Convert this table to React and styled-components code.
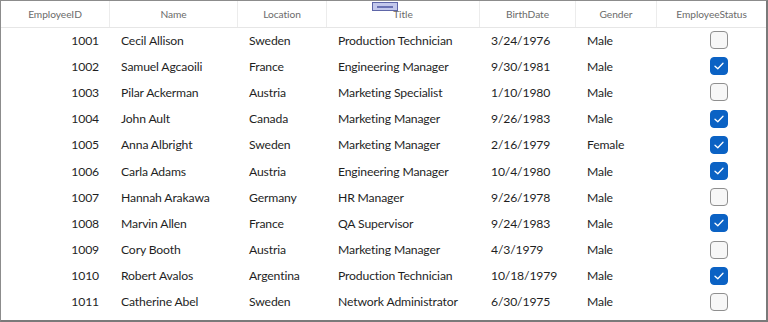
import React from "react";
import styled, { createGlobalStyle } from "styled-components";

const Global = createGlobalStyle`
  html, body { margin: 0; padding: 0; background: #fff; }
  body { font-family: Lato, "Noto Sans", sans-serif; }
`;

const COLS = "109px 128px 89px 153px 96px 81px 1fr";

const Frame = styled.div`
  position: relative;
  width: 768px;
  height: 322px;
  box-sizing: border-box;
  border: 1px solid #8c8c8c;
  border-right: 2px solid #7a7a7a;
  border-bottom: 2px solid #7a7a7a;
  background: #fff;
  overflow: hidden;
`;

const HeaderRow = styled.div`
  display: grid;
  grid-template-columns: ${COLS};
  height: 27px;
  border-bottom: 1px solid #e6e6e6;
  box-sizing: border-box;
`;

const HeaderCell = styled.div`
  display: flex;
  align-items: center;
  justify-content: center;
  font-size: 10.2px;
  letter-spacing: -0.05px;
  color: #6b6b6b;
  border-right: ${(p) => (p.$last ? "none" : "1px solid #ececec")};
  white-space: nowrap;
`;

const Row = styled.div`
  display: grid;
  grid-template-columns: ${COLS};
  height: 26.2px;
  box-sizing: border-box;
  padding-bottom: 2px;
  align-items: center;
`;

const Cell = styled.div`
  font-size: 12.2px;
  letter-spacing: -0.15px;
  color: #1f1f1f;
  white-space: nowrap;
  padding: ${(p) => (p.$right ? "0 11px 0 0" : "0 0 0 11px")};
  text-align: ${(p) => (p.$right ? "right" : "left")};
  display: ${(p) => (p.$center ? "flex" : "block")};
  justify-content: center;
`;

const Box = styled.div`
  width: 18px;
  height: 18px;
  box-sizing: border-box;
  border-radius: 4px;
  border: 1px solid ${(p) => (p.$checked ? "#0b62c4" : "#8f8f8f")};
  background: ${(p) => (p.$checked ? "#0b62c4" : "#f7f7f7")};
  display: flex;
  align-items: center;
  justify-content: center;
  margin-left: 4px;
`;

const DragHandle = styled.div`
  position: absolute;
  left: 371px;
  top: 1px;
  width: 26px;
  height: 9px;
  box-sizing: border-box;
  background: #c3c8ec;
  border: 1px solid #5e66a8;
  display: flex;
  align-items: center;
  justify-content: center;
  &::after {
    content: "";
    width: 16px;
    height: 2px;
    background: #6a72b4;
  }
`;

const data = [
  [1001, "Cecil Allison", "Sweden", "Production Technician", "3/24/1976", "Male", false],
  [1002, "Samuel Agcaoili", "France", "Engineering Manager", "9/30/1981", "Male", true],
  [1003, "Pilar Ackerman", "Austria", "Marketing Specialist", "1/10/1980", "Male", false],
  [1004, "John Ault", "Canada", "Marketing Manager", "9/26/1983", "Male", true],
  [1005, "Anna Albright", "Sweden", "Marketing Manager", "2/16/1979", "Female", true],
  [1006, "Carla Adams", "Austria", "Engineering Manager", "10/4/1980", "Male", true],
  [1007, "Hannah Arakawa", "Germany", "HR Manager", "9/26/1978", "Male", false],
  [1008, "Marvin Allen", "France", "QA Supervisor", "9/24/1983", "Male", true],
  [1009, "Cory Booth", "Austria", "Marketing Manager", "4/3/1979", "Male", false],
  [1010, "Robert Avalos", "Argentina", "Production Technician", "10/18/1979", "Male", true],
  [1011, "Catherine Abel", "Sweden", "Network Administrator", "6/30/1975", "Male", false],
];

const headers = ["EmployeeID", "Name", "Location", "Title", "BirthDate", "Gender", "EmployeeStatus"];

function Check() {
  return (
    <svg width="10" height="8" viewBox="0 0 10 8">
      <path d="M1 4.2 L3.8 6.8 L9 1.3" fill="none" stroke="#fff" strokeWidth="1.3" strokeLinecap="round" strokeLinejoin="round" />
    </svg>
  );
}

export default function App() {
  return (
    <>
      <Global />
      <Frame>
        <HeaderRow>
          {headers.map((h, i) => (
            <HeaderCell key={h} $last={i === headers.length - 1}>{h}</HeaderCell>
          ))}
        </HeaderRow>
        {data.map((r) => (
          <Row key={r[0]}>
            <Cell $right>{r[0]}</Cell>
            <Cell>{r[1]}</Cell>
            <Cell>{r[2]}</Cell>
            <Cell>{r[3]}</Cell>
            <Cell>{r[4]}</Cell>
            <Cell>{r[5]}</Cell>
            <Cell $center>
              <Box $checked={r[6]}>{r[6] && <Check />}</Box>
            </Cell>
          </Row>
        ))}
        <DragHandle />
      </Frame>
    </>
  );
}
